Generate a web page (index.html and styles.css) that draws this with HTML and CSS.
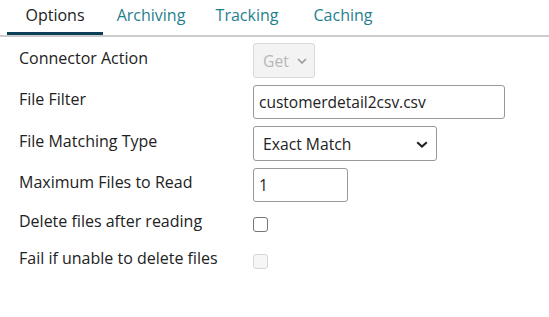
FILE: index.html
```html
<!DOCTYPE html>
<html lang="en">
<head>
    <meta charset="UTF-8">
    <meta name="viewport" content="width=device-width, initial-scale=1.0">
    <title>Connector Settings</title>
    <link rel="stylesheet" href="styles.css">
</head>
<body>
    <div class="tabs">
        <div class="tab active">Options</div>
        <div class="tab">Archiving</div>
        <div class="tab">Tracking</div>
        <div class="tab">Caching</div>
    </div>
    <form class="settings">
        <div class="row">
            <label class="label">Connector Action</label>
            <div class="select-wrap small">
                <select class="select" disabled>
                    <option>Get</option>
                </select>
                <svg class="chevron" width="10" height="6" viewBox="0 0 10 6"><path d="M1 1 L5 5 L9 1" fill="none" stroke="#999" stroke-width="1.6"/></svg>
            </div>
        </div>
        <div class="row">
            <label class="label">File Filter</label>
            <input type="text" class="text-input wide" value="customerdetail2csv.csv">
        </div>
        <div class="row">
            <label class="label">File Matching Type</label>
            <div class="select-wrap medium">
                <select class="select">
                    <option>Exact Match</option>
                </select>
                <svg class="chevron" width="12" height="7" viewBox="0 0 12 7"><path d="M1.2 1.2 L6 5.6 L10.8 1.2" fill="none" stroke="#222" stroke-width="2"/></svg>
            </div>
        </div>
        <div class="row">
            <label class="label">Maximum Files to Read</label>
            <input type="text" class="text-input narrow" value="1">
        </div>
        <div class="row check-row">
            <label class="label">Delete files after reading</label>
            <span class="checkbox"></span>
        </div>
        <div class="row check-row">
            <label class="label">Fail if unable to delete files</label>
            <span class="checkbox disabled"></span>
        </div>
    </form>
</body>
</html>
```

FILE: styles.css
```css
body {
    margin: 0;
    background-color: #fff;
    font-family: "Open Sans", Arial, sans-serif;
    color: #222;
}

.tabs {
    display: flex;
    padding-left: 7px;
    border-bottom: 2px solid #ccc;
    height: 35px;
}

.tab {
    width: 96px;
    text-align: center;
    font-size: 16px;
    line-height: 31px;
    color: #1f7f8e;
    box-sizing: border-box;
}

.tab.active {
    color: #222;
    border-bottom: 3px solid #0d3f59;
}

.settings {
    padding: 6px 0 0 19px;
}

.row {
    display: flex;
    align-items: center;
    margin-bottom: 7px;
}

.label {
    width: 234px;
    font-size: 16px;
    font-weight: 500;
    margin-top: -6px;
    white-space: nowrap;
}

.select-wrap {
    position: relative;
    height: 35px;
}

.select-wrap.small {
    width: 62px;
}

.select-wrap.medium {
    width: 184px;
}

.select {
    appearance: none;
    -webkit-appearance: none;
    width: 100%;
    height: 100%;
    box-sizing: border-box;
    border: 1px solid #999;
    border-radius: 3px;
    background-color: #fff;
    font-family: "Open Sans", Arial, sans-serif;
    font-size: 15.7px;
    color: #222;
    padding: 0 0 0 9px;
    margin: 0;
}

.select:disabled {
    background-color: #eee;
    border-color: #c8c8c8;
    color: #999;
}

.chevron {
    position: absolute;
    right: 9px;
    top: 15px;
    pointer-events: none;
}

.small .chevron {
    right: 8px;
}

.text-input {
    height: 34px;
    box-sizing: border-box;
    border: 1px solid #999;
    border-radius: 3px;
    font-family: "Open Sans", Arial, sans-serif;
    font-size: 15.5px;
    color: #222;
    padding: 0 5px;
    margin: 0;
}

.text-input.wide {
    width: 252px;
}

.text-input.narrow {
    width: 95px;
}

.check-row {
    height: 30px;
    margin-bottom: 7px;
}

.checkbox {
    display: inline-block;
    width: 13px;
    height: 13px;
    border: 1px solid #767676;
    border-radius: 3px;
    background: #fff;
}

.checkbox.disabled {
    border-color: #d6d6d6;
    background: #f6f6f6;
}
```
